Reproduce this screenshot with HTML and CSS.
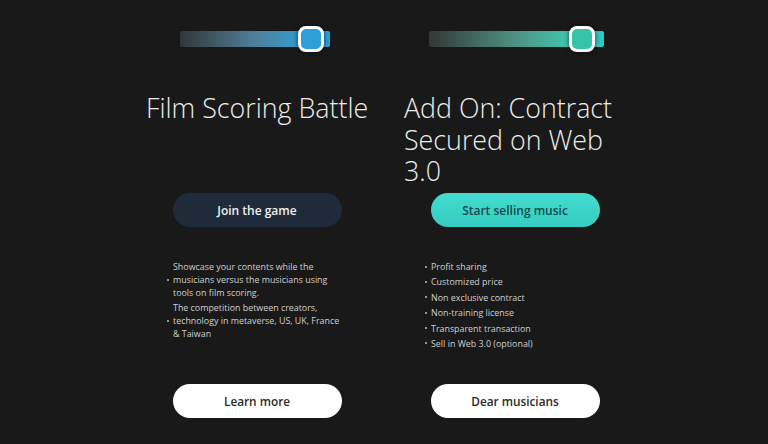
FILE: index.html
```html
<!DOCTYPE html>
<html lang="en">
<head>
    <meta charset="UTF-8">
    <meta name="viewport" content="width=device-width, initial-scale=1.0">
    <title>Film Scoring Battle</title>
    <link rel="stylesheet" href="styles.css">
</head>
<body>
    <main class="board">
        <section class="card card-battle">
            <div class="meter">
                <div class="meter-bar">
                    <span class="meter-knob"></span>
                </div>
            </div>
            <h2 class="card-title">Film Scoring Battle</h2>
            <a href="#" class="btn btn-navy">Join the game</a>
            <ul class="points">
                <li>Showcase your contents while the musicians versus the musicians using tools on film scoring.</li>
                <li>The competition between creators, technology in metaverse, US, UK, France &amp; Taiwan</li>
            </ul>
            <a href="#" class="btn btn-white">Learn more</a>
        </section>

        <section class="card card-contract">
            <div class="meter">
                <div class="meter-bar">
                    <span class="meter-knob"></span>
                </div>
            </div>
            <h2 class="card-title">Add On: Contract Secured on Web 3.0</h2>
            <a href="#" class="btn btn-teal">Start selling music</a>
            <ul class="points">
                <li>Profit sharing</li>
                <li>Customized price</li>
                <li>Non exclusive contract</li>
                <li>Non-training license</li>
                <li>Transparent transaction</li>
                <li>Sell in Web 3.0 (optional)</li>
            </ul>
            <a href="#" class="btn btn-white">Dear musicians</a>
        </section>
    </main>
</body>
</html>
```

FILE: styles.css
```css
:root {
    --bg: #1a1919;
    --blue: #2e9fd8;
    --teal: #3dcfb6;
}

* {
    margin: 0;
    padding: 0;
    box-sizing: border-box;
    font-family: 'Open Sans', 'Noto Sans', sans-serif;
}

body {
    background: var(--bg);
    color: #e6e6e6;
}

.board {
    display: flex;
    justify-content: center;
    padding-left: 4px;
}

.card {
    width: 258px;
    height: 444px;
    padding: 26px 18px;
    display: flex;
    flex-direction: column;
    align-items: center;
}

/* progress meter */
.meter {
    height: 26px;
    display: flex;
    align-items: center;
}

.meter-bar {
    position: relative;
    height: 16px;
    border-radius: 2px;
}

.card-battle .meter-bar {
    width: 150px;
    margin-left: -4px;
    background: linear-gradient(90deg, #33363a 0%, #4f8099 50%, var(--blue) 85%);
}

.card-contract .meter-bar {
    width: 175px;
    margin-left: 2px;
    background: linear-gradient(90deg, #333836 0%, #4f9283 50%, var(--teal) 85%, #2cc9c6 100%);
}

.meter-knob {
    position: absolute;
    top: -5px;
    width: 26px;
    height: 26px;
    border: 3px solid #fff;
    border-radius: 8px;
    box-shadow: 0 0 5px rgba(0, 0, 0, 0.7);
}

.card-battle .meter-knob {
    right: 6px;
    background: var(--blue);
}

.card-contract .meter-knob {
    right: 9px;
    background: #36c4a8;
}

.card-title {
    align-self: stretch;
    margin-top: 40px;
    margin-right: -12px;
    min-height: 101px;
    font-size: 26.8px;
    font-weight: 300;
    line-height: 31.5px;
    color: #ececec;
}

.btn {
    display: flex;
    align-items: center;
    justify-content: center;
    width: 169px;
    height: 34px;
    border-radius: 17px;
    text-decoration: none;
    font-size: 12px;
    font-weight: 600;
}

.btn-navy {
    background: #1f2a3b;
    color: #f2f2f2;
}

.btn-teal {
    background: linear-gradient(180deg, #43dccd, #35cbc1);
    color: #124a50;
}

.btn-white {
    margin-top: auto;
    background: #fff;
    color: #2a2a2a;
    font-size: 11.8px;
}

.points {
    width: 180px;
    margin-top: 33px;
    list-style: none;
    font-size: 8.9px;
    line-height: 13px;
    color: #cfcfcf;
}

.points li {
    display: flex;
    align-items: center;
    margin-bottom: 2px;
}

.card-contract .points li {
    margin-bottom: 2.4px;
}

.points li::before {
    content: '';
    flex: none;
    width: 2px;
    height: 2px;
    margin-right: 4px;
    border-radius: 50%;
    background: #bdbdbd;
}
```
